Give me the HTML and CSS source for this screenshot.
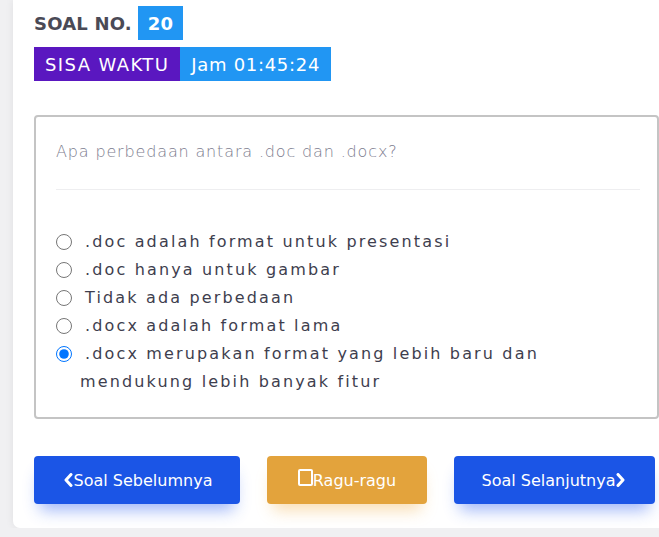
FILE: index.html
```html
<!DOCTYPE html>
<html lang="id">
<head>
<meta charset="utf-8">
<title>Soal</title>
<link rel="stylesheet" href="styles.css">
</head>
<body>
<div class="page">
  <div class="card">
    <div class="head-row">
      <span class="soal-label">SOAL NO.</span>
      <span class="badge badge-blue num">20</span>
    </div>
    <div class="time-row">
      <span class="badge badge-purple caps">SISA WAKTU</span><span class="badge badge-blue">Jam 01:45:24</span>
    </div>

    <div class="qbox">
      <p class="question">Apa perbedaan antara .doc dan .docx?</p>
      <hr class="sep">
      <div class="options">
        <label class="opt"><input type="radio" name="j">.doc adalah format untuk presentasi</label>
        <label class="opt"><input type="radio" name="j">.doc hanya untuk gambar</label>
        <label class="opt"><input type="radio" name="j">Tidak ada perbedaan</label>
        <label class="opt"><input type="radio" name="j">.docx adalah format lama</label>
        <label class="opt"><input type="radio" name="j" checked>.docx merupakan format yang lebih baru dan mendukung lebih banyak fitur</label>
      </div>
    </div>

    <div class="nav">
      <button class="btn btn-blue btn-prev"><svg class="chev" width="10" height="14" viewBox="0 0 10 14"><path d="M8 1.5 L3 7 L8 12.5" fill="none" stroke="#fff" stroke-width="3" stroke-linecap="round" stroke-linejoin="round"/></svg>Soal Sebelumnya</button>
      <button class="btn btn-orange btn-ragu"><svg class="box-ic" width="15" height="17" viewBox="0 0 15 17"><rect x="1" y="1" width="13" height="15" rx="1" fill="none" stroke="#fff" stroke-width="2"/></svg>Ragu-ragu</button>
      <button class="btn btn-blue btn-next">Soal Selanjutnya<svg class="chev" width="10" height="14" viewBox="0 0 10 14"><path d="M2 1.5 L7 7 L2 12.5" fill="none" stroke="#fff" stroke-width="3" stroke-linecap="round" stroke-linejoin="round"/></svg></button>
    </div>
  </div>
</div>
</body>
</html>
```
FILE: styles.css
```css
html, body {
  margin: 0;
  padding: 0;
  overflow: hidden;
}
body {
  background: #f0f0f2;
  font-family: "DejaVu Sans", "Noto Sans", sans-serif;
  color: #3e3e4e;
}
.page {
  padding-left: 13px;
}
.card {
  width: 625px;
  background: #fff;
  padding: 6px 21px 24px 21px;
  border-radius: 0 0 7px 7px;
  box-shadow: 0 0 8px rgba(0, 0, 0, 0.07);
}
.head-row {
  display: flex;
  align-items: center;
  height: 34px;
}
.soal-label {
  font-size: 18px;
  font-weight: 700;
  letter-spacing: 0.2px;
  color: #4a4a56;
  margin-right: 6px;
}
.badge {
  display: inline-flex;
  align-items: center;
  height: 34px;
  padding: 0 11px;
  color: #fff;
  font-size: 18px;
  letter-spacing: 0.7px;
  box-sizing: border-box;
}
.badge.caps {
  letter-spacing: 1.4px;
}
.badge.num {
  font-weight: 700;
  padding: 0 10px;
  letter-spacing: 0;
}
.badge-blue {
  background: #2196f3;
}
.badge-purple {
  background: #5a17c0;
}
.time-row {
  display: flex;
  margin-top: 7px;
}
.qbox {
  margin-top: 34px;
  border: 2px solid #c4c4c4;
  border-radius: 4px;
  padding: 24px 17px 21px 20px;
}
.question {
  margin: 0;
  font-size: 16px;
  line-height: 22px;
  letter-spacing: 0.85px;
  color: #7c7c8e;
  font-weight: 200;
}
.sep {
  margin: 26px 0 0 0;
  border: 0;
  border-top: 1px solid #eeeef0;
  height: 0;
}
.options {
  margin-top: 38px;
  padding-left: 24px;
}
.opt {
  display: block;
  font-size: 16px;
  line-height: 28px;
  letter-spacing: 2.15px;
  color: #3e3e4e;
  text-indent: 5px;
}
.opt input {
  float: left;
  width: 16px;
  height: 16px;
  margin: 6px 0 0 -24px;
}
.nav {
  display: flex;
  gap: 27px;
  margin-top: 37px;
}
.btn {
  height: 48px;
  border: 0;
  border-radius: 4px;
  color: #fff;
  font-family: "DejaVu Sans", "Noto Sans", sans-serif;
  font-size: 16px;
  display: flex;
  align-items: center;
  justify-content: center;
  padding: 0;
}
.btn-blue {
  background: #1b55e6;
  box-shadow: 0 12px 16px -6px rgba(40, 90, 240, 0.45);
}
.btn-orange {
  background: #e3a33c;
  box-shadow: 0 12px 16px -6px rgba(240, 170, 60, 0.4);
}
.btn-prev {
  width: 206px;
}
.btn-ragu {
  width: 160px;
}
.btn-next {
  width: 201px;
}
.chev {
  margin: 0 1px;
}
.box-ic {
  margin-bottom: 6px;
}
```
